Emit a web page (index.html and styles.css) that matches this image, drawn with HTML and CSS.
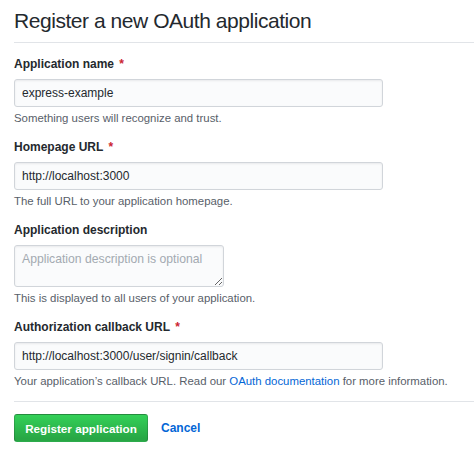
FILE: index.html
```html
<!DOCTYPE html>
<html>
<head>
<meta charset="utf-8">
<link rel="stylesheet" href="styles.css">
</head>
<body>
<div class="page">
  <h1 class="title">Register a new OAuth application</h1>
  <form class="form">
    <div class="group">
      <label class="label">Application name <span class="req">*</span></label>
      <input class="input" type="text" value="express-example">
      <p class="hint">Something users will recognize and trust.</p>
    </div>
    <div class="group">
      <label class="label">Homepage URL <span class="req">*</span></label>
      <input class="input" type="text" value="http://localhost:3000">
      <p class="hint">The full URL to your application homepage.</p>
    </div>
    <div class="group">
      <label class="label">Application description</label>
      <textarea class="textarea" placeholder="Application description is optional"></textarea>
      <p class="hint">This is displayed to all users of your application.</p>
    </div>
    <div class="group last">
      <label class="label">Authorization callback URL <span class="req">*</span></label>
      <input class="input" type="text" value="http://localhost:3000/user/signin/callback">
      <p class="hint">Your application’s callback URL. Read our <a class="link" href="#">OAuth documentation</a> for more information.</p>
    </div>
    <div class="actions">
      <button class="btn" type="button">Register application</button>
      <a class="cancel" href="#">Cancel</a>
    </div>
  </form>
</div>
</body>
</html>
```
FILE: styles.css
```css
html, body {
  margin: 0;
  padding: 0;
  background: #fff;
}
body {
  font-family: "Liberation Sans", Arial, sans-serif;
  color: #24292e;
}
.page {
  padding-left: 14px;
}
.title {
  margin: 0;
  padding-top: 6px;
  box-sizing: border-box;
  height: 43px;
  line-height: 30px;
  font-size: 21px;
  letter-spacing: -0.45px;
  font-weight: 400;
  border-bottom: 1px solid #e1e4e8;
}
.form {
  padding-top: 11px;
}
.group {
  margin-bottom: 10px;
}
.label {
  display: block;
  height: 20px;
  line-height: 20px;
  font-size: 12px;
  font-weight: 700;
  margin-bottom: 5px;
}
.req {
  color: #cb2431;
  margin-left: 2px;
}
.input {
  display: block;
  box-sizing: border-box;
  width: 369px;
  height: 28px;
  margin: 0;
  padding: 0 7px;
  font-family: inherit;
  font-size: 12px;
  color: #24292e;
  background: #fafbfc;
  border: 1px solid #d1d5da;
  border-radius: 3px;
  box-shadow: inset 0 1px 2px rgba(27,31,35,0.075);
}
.textarea {
  display: block;
  box-sizing: border-box;
  width: 210px;
  height: 42px;
  margin: 0;
  padding: 5px 7px;
  font-family: inherit;
  font-size: 12.2px;
  line-height: 16px;
  background: #fafbfc;
  border: 1px solid #d1d5da;
  border-radius: 3px;
  box-shadow: inset 0 1px 2px rgba(27,31,35,0.075);
  resize: both;
}
.textarea::placeholder {
  color: #a3aab1;
}
.hint {
  margin: 2px 0 0;
  height: 18px;
  line-height: 18px;
  font-size: 11.4px;
  color: #586069;
}
.link {
  color: #0366d6;
  text-decoration: none;
}
.group.last {
  margin-bottom: 0;
  padding-bottom: 11px;
  border-bottom: 1px solid #e1e4e8;
}
.actions {
  display: flex;
  align-items: center;
  gap: 13px;
  padding-top: 12px;
}
.btn {
  box-sizing: border-box;
  width: 134px;
  height: 28px;
  padding: 0;
  font-family: inherit;
  font-size: 11.7px;
  font-weight: 700;
  color: #fff;
  background-image: linear-gradient(-180deg, #34d058 0%, #28a745 90%);
  border: 1px solid rgba(27,31,35,0.2);
  border-radius: 3px;
}
.cancel {
  font-size: 12px;
  font-weight: 700;
  color: #0366d6;
  text-decoration: none;
}
```
